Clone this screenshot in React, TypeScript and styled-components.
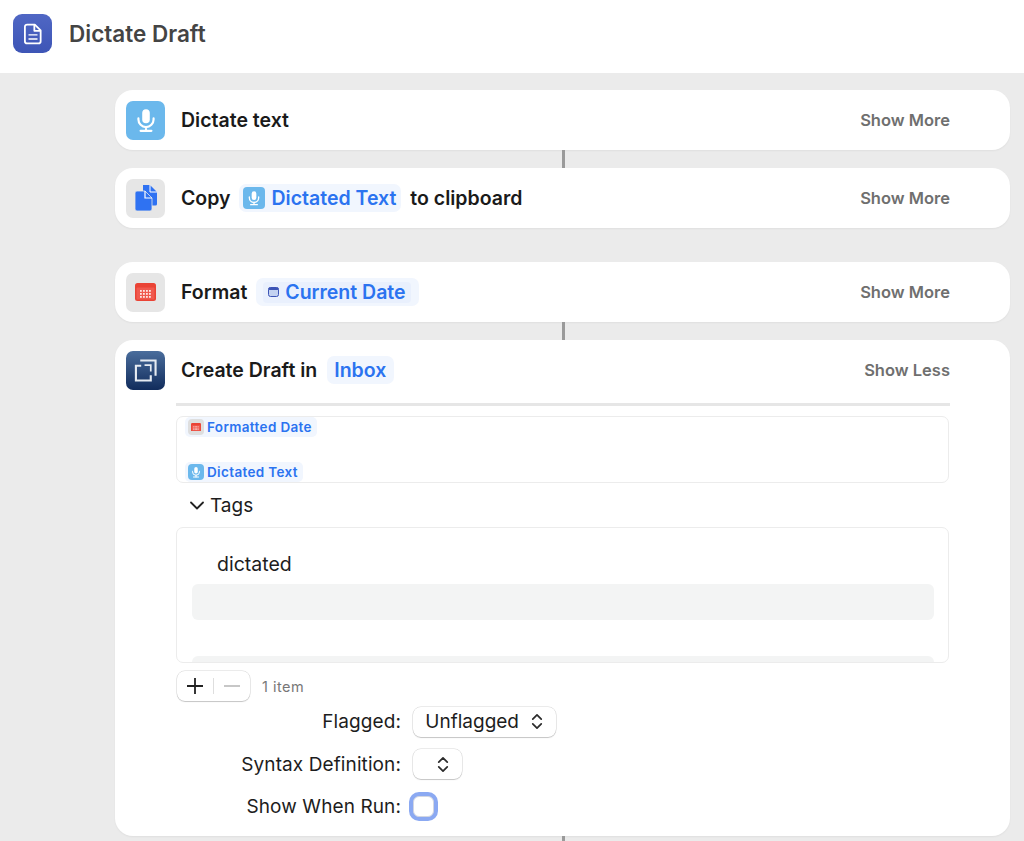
import React from "react";
import styled, { createGlobalStyle } from "styled-components";

const Global = createGlobalStyle`
  html, body { margin: 0; padding: 0; background: #ebebeb; }
  body { font-family: Inter, "Liberation Sans", sans-serif; -webkit-font-smoothing: antialiased; }
  #root { height: 841px; overflow: hidden; }
`;

const Header = styled.header`
  height: 73px; background: #fff; display: flex; align-items: center;
  padding: 0 0 6px 13px; box-sizing: border-box; gap: 17px;
`;
const AppIcon = styled.div`
  width: 39px; height: 39px; border-radius: 9px;
  background: linear-gradient(180deg, #5067c4, #3d55b6);
  display: flex; align-items: center; justify-content: center;
`;
const Title = styled.h1`
  margin: 0; font-size: 22.5px; line-height: 28px; font-weight: 600; color: #444;
`;
const Canvas = styled.main`
  display: flex; flex-direction: column; padding: 17px 14px 0 115px;
`;
const Card = styled.section`
  background: #fff; border-radius: 18px; box-shadow: 0 1px 2px rgba(0,0,0,.05);
`;
const Row = styled.div`
  height: 60px; display: flex; align-items: center; padding: 0 60px 0 11px;
  font-size: 19.5px; font-weight: 600; color: #1a1a1a;
`;
const IconBox = styled.div<{ $bg: string }>`
  width: 39px; height: 39px; border-radius: 7px; background: ${p => p.$bg};
  display: flex; align-items: center; justify-content: center; flex: none; margin-right: 16px;
`;
const Word = styled.span`
  white-space: nowrap;
`;
const Chip = styled.span`
  display: inline-flex; align-items: center; height: 28px; padding: 0 5px 0 4px; gap: 7px;
  margin: 0 9px 0 8px;
  background: #f1f6fe; border-radius: 7px; color: #2b73f0; white-space: nowrap;
`;
const PlainChip = styled(Chip)`
  padding: 0 8px 0 7px; margin-left: 10px;
`;
const DateChip = styled(Chip)`
  padding: 0 8px 0 7px; margin-left: 9px;
`;
const DateInner = styled.span`
  display: inline-flex; align-items: center; gap: 6px; height: 21px; padding: 0 5px;
  background: #e9f0fd; border-radius: 4px;
`;
const ChipIcon = styled.span<{ $bg: string; $s?: number }>`
  width: ${p => p.$s ?? 22}px; height: ${p => p.$s ?? 22}px; border-radius: 4px; background: ${p => p.$bg};
  display: inline-flex; align-items: center; justify-content: center; flex: none;
`;
const Toggle = styled.span`
  margin-left: auto; font-size: 16.5px; font-weight: 600; color: #6f6f6f; white-space: nowrap;
`;
const Connector = styled.div`
  width: 3px; height: 18px; background: #9a9a9a; margin-left: 447px; flex: none;
`;
const Gap = styled.div`
  height: 34px; flex: none;
`;
const Body = styled.div`
  padding: 0 61px 10px 61px; display: flex; flex-direction: column;
`;
const Divider = styled.div`
  height: 3px; background: #e6e6e6; margin: 3px -1px 0 0;
`;
const TextBox = styled.div`
  height: 67px; margin-top: 10px; border: 1px solid #ececec; border-radius: 7px; box-sizing: border-box;
  overflow: hidden; padding: 0 0 0 8px; display: flex; flex-direction: column; gap: 25px; align-items: flex-start;
`;
const SmallChip = styled.span`
  display: inline-flex; align-items: center; height: 20px; gap: 3px; padding: 0 5px 0 3px;
  background: #f1f6fe; border-radius: 5px; color: #2b73f0; font-size: 13.5px; font-weight: 600; letter-spacing: .35px; white-space: nowrap;
`;
const TagsHead = styled.div`
  display: flex; align-items: center; gap: 6px; height: 44px; padding-left: 14px;
  font-size: 19px; color: #1d1d1d;
`;
const TagList = styled.div`
  height: 136px; border: 1px solid #ececec; border-radius: 7px; box-sizing: border-box; overflow: hidden;
  padding: 23px 14px 0 15px;
`;
const Tag = styled.div`
  font-size: 19.5px; line-height: 26px; color: #1d1d1d; padding-left: 25px; height: 33px;
`;
const Stripe = styled.div`
  height: 36px; background: #f3f4f4; border-radius: 6px; margin-bottom: 36px;
`;
const ListFoot = styled.div`
  display: flex; align-items: center; margin: 8px 0 0 1px; gap: 12px; height: 30px;
`;
const AddRemove = styled.div`
  width: 73px; height: 30px; border-radius: 8px; background: #fff; box-sizing: border-box;
  box-shadow: 0 0 0 .5px rgba(0,0,0,.16), 0 1px 1px rgba(0,0,0,.16);
  display: flex; align-items: center; justify-content: space-around; padding: 0 5px;
`;
const Sep = styled.span`
  width: 1px; height: 16px; background: #dedede;
`;
const Count = styled.span`
  font-size: 14.5px; color: #777; letter-spacing: .5px;
`;
const Field = styled.div<{ $h: number }>`
  display: grid; grid-template-columns: 225px auto; column-gap: 12px; align-items: center; justify-content: start;
  height: ${p => p.$h}px; font-size: 19px; letter-spacing: .1px; color: #1d1d1d;
`;
const Label = styled.label`
  text-align: right; white-space: nowrap;
`;
const Select = styled.div<{ $w: number }>`
  width: ${p => p.$w}px; height: 30px; border-radius: 8px; background: #fff; box-sizing: border-box;
  box-shadow: 0 0 0 .5px rgba(0,0,0,.16), 0 1px 1px rgba(0,0,0,.16);
  display: flex; align-items: center; justify-content: flex-end; gap: 12px; padding-right: 13px;
  font-size: 19px; letter-spacing: 0; white-space: nowrap;
`;
const Check = styled.div`
  width: 21px; height: 21px; border-radius: 6px; background: #fff; box-sizing: border-box;
  border: 1px solid #d2d6e2; box-shadow: 0 0 0 4px #8ba9f2;
`;

const Mic = ({ s, c = "#fff" }: { s: number; c?: string }) => (
  <svg width={s} height={s} viewBox="0 0 24 24" fill="none" stroke={c} strokeWidth="2" strokeLinecap="round">
    <rect x="8.5" y="2" width="7" height="13" rx="3.5" fill={c} stroke="none" />
    <path d="M5 10.500v1a7 7 0 0 0 14 0v-1M12 18.500V22M7 22h10" />
  </svg>
);
const Docs = () => (
  <svg width="22" height="26" viewBox="0 0 22 26">
    <path d="M8 0h7l7 7v12a1.500 1.500 0 0 1-1.500 1.500H8z" fill="#2f72f2" />
    <path d="M15 0v7h7" fill="none" stroke="#fff" strokeWidth="1" />
    <path d="M2 6h8l7 7v11a2 2 0 0 1-2 2H2a2 2 0 0 1-2-2V8a2 2 0 0 1 2-2z" fill="#2f72f2" stroke="#e6e6e6" strokeWidth=".8" />
    <path d="M10 6v7h7" fill="none" stroke="#fff" strokeWidth="1.200" />
  </svg>
);
const Cal = ({ s = 21 }: { s?: number }) => (
  <svg width={s} height={s * 18 / 21} viewBox="0 0 21 18">
    <rect x="0" y="0" width="21" height="18" rx="2.500" fill="#ea4335" />
    <rect x="1.500" y="4.500" width="18" height="12" rx="1" fill="#f0594e" />
    {[7, 10, 13].map(y => [5, 8, 11, 14].map(x => (
      <rect key={`${x}-${y}`} x={x} y={y} width="1.800" height="1.800" fill="#fff" opacity=".85" />
    )))}
  </svg>
);
const MiniCal = () => (
  <svg width="11" height="10" viewBox="0 0 11 10">
    <rect x=".5" y=".5" width="10" height="9" rx="2" fill="#c3d2f1" stroke="#3d55b6" />
    <rect x=".5" y=".5" width="10" height="2.500" rx="1" fill="#3d55b6" />
  </svg>
);
const Drafts = () => (
  <svg width="23" height="23" viewBox="0 0 24 24" fill="none" stroke="#e6ebf2" strokeWidth="2.200">
    <path d="M6.500 1.500H22.500V17.500" />
    <path d="M7.500 7H2V22.500H17.500V17" />
    <path d="M11 6.500H17.500V13" strokeWidth="1.800" />
  </svg>
);
const Updown = () => (
  <svg width="12" height="17" viewBox="0 0 12 18" fill="none" stroke="#2b2b2b" strokeWidth="1.800" strokeLinecap="round" strokeLinejoin="round">
    <path d="M1.500 6.500L6 2l4.500 4.500M1.500 11.500L6 16l4.500-4.500" />
  </svg>
);

export default function App() {
  return (
    <>
      <Global />
      <Header>
        <AppIcon>
          <svg width="18" height="22" viewBox="0 0 20 24" fill="none" stroke="#fff" strokeWidth="2" strokeLinejoin="round">
            <path d="M3.500 1.500H12l6.500 6.500v12a2.500 2.500 0 0 1-2.500 2.500H3.500A2.500 2.500 0 0 1 1 20V4a2.500 2.500 0 0 1 2.500-2.500z" />
            <path d="M11.500 1.500V8.500h7" />
            <path d="M5 13h10M5 17.500h10" strokeWidth="1.600" />
          </svg>
        </AppIcon>
        <Title>Dictate Draft</Title>
      </Header>
      <Canvas>
        <Card>
          <Row>
            <IconBox $bg="#6bb8ec"><Mic s={26} /></IconBox>
            <Word>Dictate text</Word>
            <Toggle>Show More</Toggle>
          </Row>
        </Card>
        <Connector />
        <Card>
          <Row>
            <IconBox $bg="#e6e6e6"><Docs /></IconBox>
            <Word>Copy</Word>
            <Chip><ChipIcon $bg="#6bb8ec"><Mic s={16} /></ChipIcon>Dictated Text</Chip>
            <Word>to clipboard</Word>
            <Toggle>Show More</Toggle>
          </Row>
        </Card>
        <Gap />
        <Card>
          <Row>
            <IconBox $bg="#e6e6e6"><Cal /></IconBox>
            <Word>Format</Word>
            <DateChip><DateInner><MiniCal />Current Date</DateInner></DateChip>
            <Toggle>Show More</Toggle>
          </Row>
        </Card>
        <Connector />
        <Card>
          <Row>
            <IconBox $bg="linear-gradient(180deg,#4a6d9c,#112c5c)"><Drafts /></IconBox>
            <Word>Create Draft in</Word>
            <PlainChip>Inbox</PlainChip>
            <Toggle>Show Less</Toggle>
          </Row>
          <Body>
            <Divider />
            <TextBox>
              <SmallChip><ChipIcon $bg="#dedede" $s={16}><Cal s={10} /></ChipIcon>Formatted Date</SmallChip>
              <SmallChip><ChipIcon $bg="#6bb8ec" $s={16}><Mic s={12} /></ChipIcon>Dictated Text</SmallChip>
            </TextBox>
            <TagsHead>
              <svg width="14" height="9" viewBox="0 0 14 9" fill="none" stroke="#222" strokeWidth="1.800" strokeLinecap="round" strokeLinejoin="round">
                <path d="M1 1.500l6 6 6-6" />
              </svg>
              Tags
            </TagsHead>
            <TagList>
              <Tag>dictated</Tag>
              <Stripe />
              <Stripe />
            </TagList>
            <ListFoot>
              <AddRemove>
                <svg width="16" height="16" viewBox="0 0 16 16" stroke="#222" strokeWidth="1.800"><path d="M8 0v16M0 8h16" /></svg>
                <Sep />
                <svg width="16" height="16" viewBox="0 0 16 16" stroke="#b5b5b5" strokeWidth="1.500"><path d="M0 8h16" /></svg>
              </AddRemove>
              <Count>1 item</Count>
            </ListFoot>
            <Field $h={41}>
              <Label>Flagged:</Label>
              <Select $w={143}>Unflagged<Updown /></Select>
            </Field>
            <Field $h={44}>
              <Label>Syntax Definition:</Label>
              <Select $w={49}><Updown /></Select>
            </Field>
            <Field $h={40}>
              <Label>Show When Run:</Label>
              <Check />
            </Field>
          </Body>
        </Card>
        <Connector />
      </Canvas>
    </>
  );
}
